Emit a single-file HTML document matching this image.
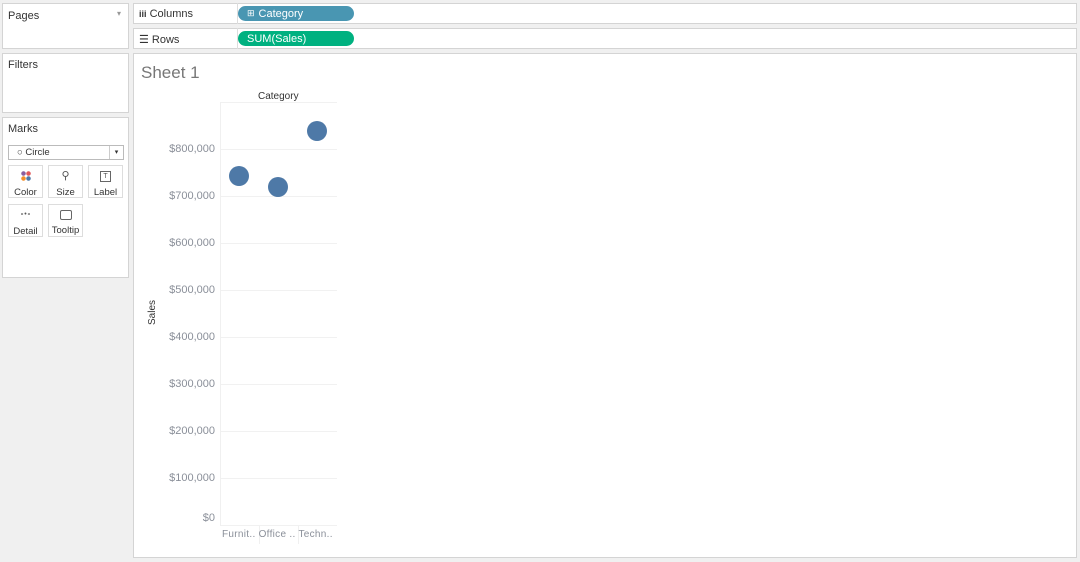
<!DOCTYPE html><html><head><style>
body{margin:0;width:1080px;height:562px;background:#f0f0f0;font-family:"Liberation Sans",sans-serif;position:relative;overflow:hidden}
.p{position:absolute;background:#fff;border:1px solid #d4d4d4;box-sizing:border-box}
.t{position:absolute;font-size:11px;color:#333}
.g{position:absolute;left:221px;width:116px;height:1px;background:#f1f1f1}
.y{position:absolute;width:80px;left:135px;text-align:right;font-size:11px;color:#8a8f99}
.d{position:absolute;width:20px;height:20px;border-radius:50%;background:#4e79a7}
.b{position:absolute;width:35px;height:33px;border:1px solid #ddd;box-sizing:border-box;background:#fff;font-size:9.5px;color:#333;text-align:center}
.pill{position:absolute;left:238px;width:116px;height:15px;border-radius:8px;color:#fff;font-size:11px;padding-left:9px;box-sizing:border-box;display:flex;align-items:center}
</style></head><body>
<div class="p" style="left:2px;top:3px;width:127px;height:46px"></div>
<div class="t" style="left:8px;top:10px">Pages</div><div class="t" style="left:117px;top:9px;font-size:8px;color:#999">▾</div>
<div class="p" style="left:2px;top:53px;width:127px;height:60px"></div>
<div class="t" style="left:8px;top:59px">Filters</div>
<div class="p" style="left:2px;top:117px;width:127px;height:161px"></div>
<div class="t" style="left:8px;top:123px">Marks</div>
<div style="position:absolute;left:8px;top:145px;width:116px;height:15px;border:1px solid #bbb;box-sizing:border-box;background:#fff;font-size:9.5px;color:#333;line-height:13px;padding-left:8px">○ Circle<span style="position:absolute;right:0;top:0;width:13px;border-left:1px solid #ccc;text-align:center;font-size:7px">▾</span></div>
<div class="b" style="left:8px;top:165px"><div style="margin:5px auto 0;width:10px;height:10px;background:radial-gradient(circle at 25% 25%,#8a5fa0 2px,transparent 2.5px),radial-gradient(circle at 75% 25%,#e15759 2px,transparent 2.5px),radial-gradient(circle at 25% 75%,#f28e2b 2px,transparent 2.5px),radial-gradient(circle at 75% 75%,#4e79a7 2px,transparent 2.5px)"></div><div style="margin-top:6px">Color</div></div>
<div class="b" style="left:48px;top:165px"><div style="margin:5px auto 0;height:11px;font-size:11px;line-height:11px;color:#555">⚲</div><div style="margin-top:5px">Size</div></div>
<div class="b" style="left:88px;top:165px"><div style="margin:5px auto 0;width:9px;height:9px;border:1px solid #666;font-size:7px;line-height:9px;color:#555">T</div><div style="margin-top:5px">Label</div></div>
<div class="b" style="left:8px;top:204px"><div style="margin:4px auto 0;font-size:7px;line-height:11px;color:#555">∘•∘</div><div style="margin-top:6px">Detail</div></div>
<div class="b" style="left:48px;top:204px"><div style="margin:5px auto 0;width:10px;height:8px;border:1px solid #666;border-radius:2px"></div><div style="margin-top:5px">Tooltip</div></div>
<div class="p" style="left:133px;top:3px;width:944px;height:21px"></div>
<div style="position:absolute;left:237px;top:3px;width:1px;height:21px;background:#ddd"></div>
<div class="t" style="left:139px;top:8px"><b style="font-size:9px">iii</b> Columns</div>
<div class="pill" style="top:6px;background:#4996b2"><span style="font-size:9px;margin-right:4px">⊞</span>Category</div>
<div class="p" style="left:133px;top:28px;width:944px;height:21px"></div>
<div style="position:absolute;left:237px;top:28px;width:1px;height:21px;background:#ddd"></div>
<div class="t" style="left:139px;top:33px">☰ Rows</div>
<div class="pill" style="top:31px;background:#00b180">SUM(Sales)</div>
<div class="p" style="left:133px;top:53px;width:944px;height:505px"></div>
<div style="position:absolute;left:141px;top:63px;font-size:17px;color:#777">Sheet 1</div>
<div class="t" style="left:258px;top:91px;font-size:10px">Category</div>
<div class="g" style="top:102px"></div>
<div class="g" style="top:149px"></div><div class="g" style="top:196px"></div><div class="g" style="top:243px"></div><div class="g" style="top:290px"></div><div class="g" style="top:337px"></div><div class="g" style="top:384px"></div><div class="g" style="top:431px"></div><div class="g" style="top:478px"></div><div class="g" style="top:525px"></div>
<div style="position:absolute;left:220px;top:102px;width:1px;height:424px;background:#f0f0f0"></div>
<div style="position:absolute;left:259px;top:526px;width:1px;height:18px;background:#f0f0f0"></div>
<div style="position:absolute;left:298px;top:526px;width:1px;height:18px;background:#f0f0f0"></div>
<div class="y" style="top:143px">$800,000</div><div class="y" style="top:190px">$700,000</div><div class="y" style="top:237px">$600,000</div><div class="y" style="top:284px">$500,000</div><div class="y" style="top:331px">$400,000</div><div class="y" style="top:378px">$300,000</div><div class="y" style="top:425px">$200,000</div><div class="y" style="top:472px">$100,000</div><div class="y" style="top:512px">$0</div>
<div class="t" style="left:140px;top:307px;font-size:10px;transform:rotate(-90deg);transform-origin:center">Sales</div>
<div class="y" style="left:222px;width:120px;text-align:left;top:529px;font-size:10px;letter-spacing:0.3px">Furnit.. Office .. Techn..</div>
<div class="d" style="left:229px;top:166px"></div>
<div class="d" style="left:268px;top:177px"></div>
<div class="d" style="left:307px;top:121px"></div>
</body></html>
